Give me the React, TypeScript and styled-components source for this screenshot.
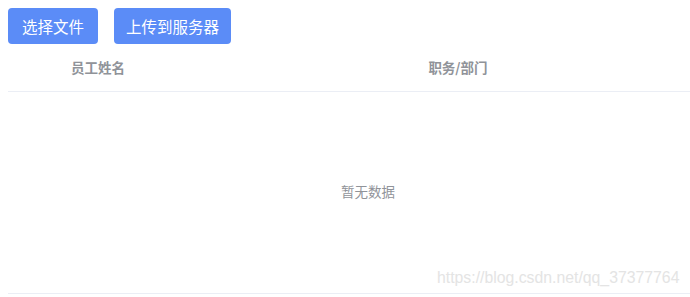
import styled, { createGlobalStyle } from 'styled-components';

const GlobalStyle = createGlobalStyle`
  html,
  body {
    overflow: hidden;
  }
  body {
    margin: 8px 0 0 8px;
    background: #fff;
    font-family: "Noto Sans CJK SC", sans-serif;
  }
`;

const columns = [
  { label: '员工姓名', width: 180 },
  { label: '职务/部门', width: 540 },
];

const App = () => (
  <>
    <GlobalStyle />
    <Toolbar>
      <Button>选择文件</Button>
      <Button>上传到服务器</Button>
    </Toolbar>
    <Table>
      <HeaderRow>
        {columns.map((col) => (
          <HeaderCell key={col.label} $width={col.width}>
            {col.label}
          </HeaderCell>
        ))}
      </HeaderRow>
      <Empty>
        <EmptyText>暂无数据</EmptyText>
        <Watermark>https://blog.csdn.net/qq_37377764</Watermark>
      </Empty>
    </Table>
  </>
);

const Toolbar = styled('div')`
  display: flex;
  gap: 16px;
`;

const Button = styled('button')`
  height: 36px;
  padding: 0 14px;
  border: none;
  border-radius: 4px;
  background-color: #5b8cf7;
  color: #fff;
  font-family: "Noto Sans CJK SC", sans-serif;
  font-size: 15.5px;
  cursor: pointer;

  & + & {
    padding: 0 12px;
  }
`;

const Table = styled('div')`
  position: relative;
  overflow: hidden;
  margin-top: 3px;
  border-bottom: 1px solid #ebeef5;
`;

const HeaderRow = styled('div')`
  display: flex;
  height: 44px;
  border-bottom: 1px solid #ebeef5;
`;

const HeaderCell = styled('div')<{ $width: number }>`
  flex: none;
  width: ${(p) => p.$width}px;
  display: flex;
  align-items: center;
  justify-content: center;
  padding-bottom: 4px;
  color: #909399;
  font-size: 13.5px;
  font-weight: bold;
`;

const Empty = styled('div')`
  width: 720px;
  height: 201px;
  box-sizing: border-box;
  padding-bottom: 4px;
  display: flex;
  align-items: center;
  justify-content: center;
`;

const EmptyText = styled('span')`
  color: #909399;
  font-size: 13.5px;
`;

const Watermark = styled('span')`
  position: absolute;
  left: 429px;
  bottom: 6px;
  color: #e4e4e4;
  font-family: "Liberation Sans", Arial, sans-serif;
  font-size: 15.8px;
`;

export default App;
